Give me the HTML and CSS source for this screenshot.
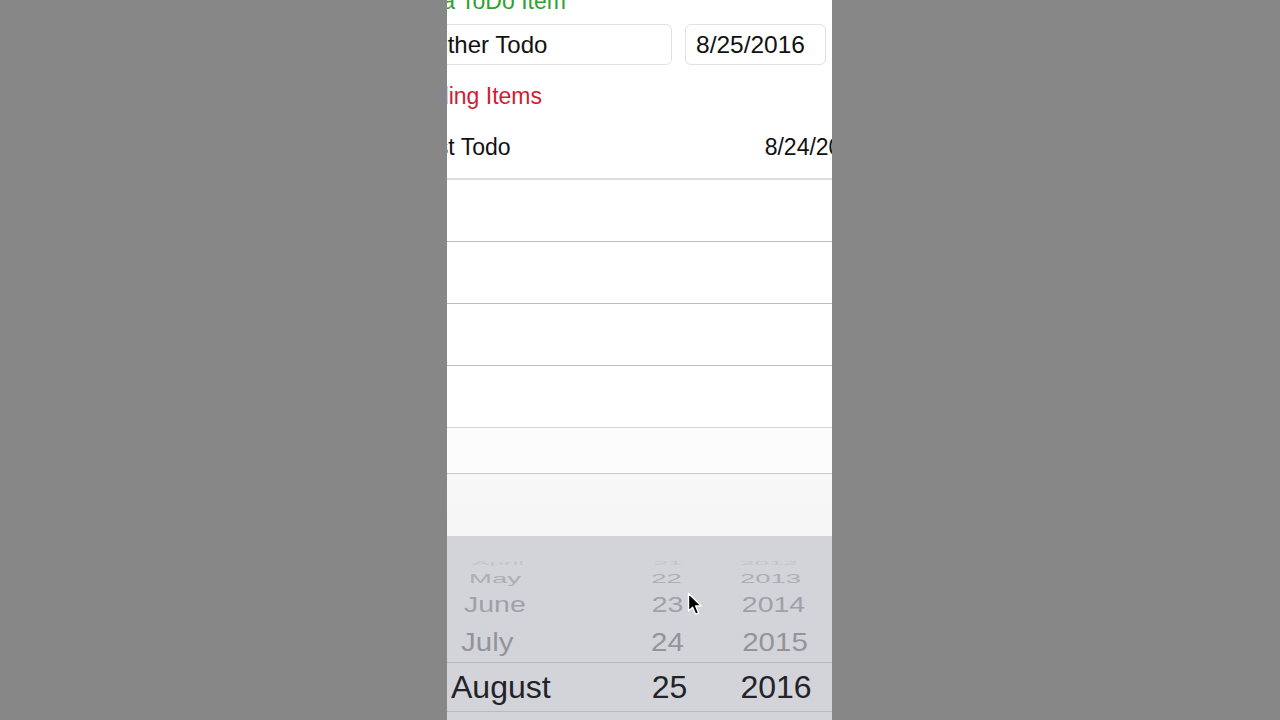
FILE: index.html
```html
<!DOCTYPE html>
<html lang="en">
<head>
    <meta charset="UTF-8">
    <meta name="viewport" content="width=device-width, initial-scale=1.0">
    <title>Todo</title>
    <link rel="stylesheet" href="styles.css">
</head>
<body>
    <div class="phone">
        <div class="screen">
            <h2 class="section-title title-add">Add a ToDo Item</h2>

            <div class="form-row">
                <input type="text" class="field field-text" value="Another Todo">
                <input type="text" class="field field-date" value="8/25/2016">
            </div>

            <h2 class="section-title title-pending">Pending Items</h2>

            <ul class="todo-list">
                <li class="todo-item first">
                    <span class="todo-name">First Todo</span>
                    <span class="todo-date">8/24/2016</span>
                </li>
                <li class="todo-item"></li>
                <li class="todo-item"></li>
                <li class="todo-item"></li>
                <li class="todo-item light"></li>
                <li class="todo-item short"></li>
            </ul>
        </div>

        <div class="picker-bar"></div>

        <div class="picker">
            <div class="wheel-row far-4">
                <span class="month">April</span><span class="day">21</span><span class="year">2012</span>
            </div>
            <div class="wheel-row far-3">
                <span class="month">May</span><span class="day">22</span><span class="year">2013</span>
            </div>
            <div class="wheel-row far-2">
                <span class="month">June</span><span class="day">23</span><span class="year">2014</span>
            </div>
            <div class="wheel-row far-1">
                <span class="month">July</span><span class="day">24</span><span class="year">2015</span>
            </div>
            <div class="wheel-row selected">
                <span class="month">August</span><span class="day">25</span><span class="year">2016</span>
            </div>
        </div>

        <svg class="cursor" width="18" height="26" viewBox="0 0 18 26">
            <path d="M1.5 1.5 L1.5 19 L5.6 15.2 L8.6 22.3 L11.6 21 L8.7 14 L14.3 14 Z" fill="#000" stroke="#fff" stroke-width="1.4" stroke-linejoin="round"/>
        </svg>
    </div>
</body>
</html>
```

FILE: styles.css
```css
body {
    margin: 0;
    padding-right: 1px;
    height: 720px;
    background-color: #878787;
    font-family: "Liberation Sans", Arial, sans-serif;
    display: flex;
    justify-content: center;
}

.phone {
    position: relative;
    width: 385px;
    height: 720px;
    background: white;
    overflow: hidden;
}

/* content is scrolled a bit to the left, so the left edge is cut off */
.screen {
    width: 487px;
    margin-left: -52px;
}

.section-title {
    margin: 0;
    height: 28px;
    font-size: 23px;
    line-height: 28px;
    font-weight: normal;
}

.title-add {
    margin-top: -13px;
    color: #2ea22e;
}

.title-pending {
    margin-top: 17px;
    color: #d01c34;
}

.form-row {
    display: flex;
    gap: 13px;
    margin-top: 9px;
}

.field {
    box-sizing: border-box;
    height: 41px;
    margin: 0;
    padding: 0 9px;
    border: 1px solid #e1e1e1;
    border-radius: 6px;
    font-family: inherit;
    font-size: 24px;
    color: #111;
    background: white;
    outline: none;
}

.field-text {
    width: 277px;
}

.field-date {
    width: 141px;
    padding-left: 10px;
    font-size: 24.5px;
}

.todo-list {
    list-style: none;
    margin: 0;
    padding: 0;
}

.todo-item {
    box-sizing: border-box;
    height: 62px;
    border-bottom: 1px solid #bdbdbd;
}

.todo-item.first {
    display: flex;
    justify-content: space-between;
    height: auto;
    padding: 23px 15px 17px;
    font-size: 23px;
    line-height: 28px;
    color: #111;
    border-bottom: 2px solid #dddddd;
}

.todo-item.light {
    border-bottom-color: #d6d6d6;
}

.todo-item.short {
    height: 46px;
    background: #fcfcfc;
    border-bottom-color: #c9c9c9;
}

.picker-bar {
    height: 62px;
    background: linear-gradient(#f8f8f8, #f5f5f5);
}

.picker {
    height: 184px;
    padding-top: 20px;
    box-sizing: border-box;
    background-color: #d2d4da;
}

.wheel-row {
    display: grid;
    grid-template-columns: 180px 82px 1fr;
    white-space: nowrap;
}

.wheel-row .month {
    padding-left: 4px;
}

.wheel-row .day {
    text-align: center;
}

.wheel-row .year {
    text-align: center;
    padding-left: 11px;
}

.far-4 {
    height: 14px;
    line-height: 14px;
    font-size: 26px;
    color: #c2c4ca;
    transform: scaleY(0.22);
}

.far-4 .month { padding-left: 25px; }
.far-4 .year { padding-right: 14px; }

.far-3 {
    height: 17px;
    line-height: 17px;
    font-size: 27.5px;
    color: #acaeb4;
    transform: scaleY(0.48);
}

.far-3 .month { padding-left: 22px; }
.far-3 .day { padding-right: 3px; }
.far-3 .year { padding-right: 11px; }

.far-2 {
    height: 35px;
    line-height: 35px;
    font-size: 28.5px;
    color: #9fa1a8;
    transform: scaleY(0.76);
}

.far-2 .month { padding-left: 17px; }
.far-2 .day { padding-right: 1px; }
.far-2 .year { padding-right: 5px; }

.far-1 {
    height: 40px;
    line-height: 40px;
    font-size: 29.5px;
    color: #929499;
    transform: scaleY(0.86);
}

.far-1 .month { padding-left: 14px; }
.far-1 .day { padding-right: 1px; }
.far-1 .year { padding-right: 2px; }

.selected {
    box-sizing: border-box;
    height: 50px;
    line-height: 48px;
    font-size: 32px;
    color: #222228;
    border-top: 1px solid #b7bac1;
    border-bottom: 1px solid #b7bac1;
}

.selected .month { padding-left: 4px; }
.selected .day { padding-left: 3px; }

.cursor {
    position: absolute;
    left: 240px;
    top: 592px;
}
```
